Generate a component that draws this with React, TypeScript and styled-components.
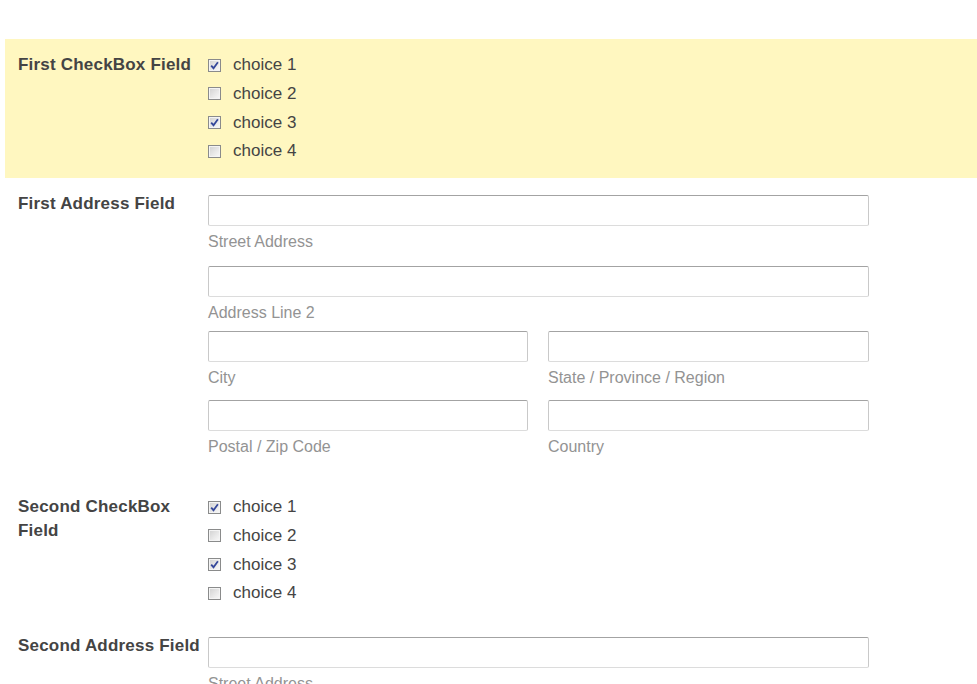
import React from "react";
import styled, { createGlobalStyle } from "styled-components";

const Global = createGlobalStyle`
  html, body { margin: 0; padding: 0; background: #fff; overflow: hidden; }
  body { font-family: "Liberation Sans", Arial, sans-serif; color: #444; }
`;

const Form = styled.ul`
  list-style: none;
  margin: 0;
  padding: 39px 0 0 5px;
`;

const Field = styled.li<{ $highlight?: boolean; $pb: number }>`
  display: grid;
  grid-template-columns: 190px 661px;
  padding: 12px 0 ${(p) => p.$pb}px 13px;
  background: ${(p) => (p.$highlight ? "#fff7c0" : "transparent")};
`;

const Label = styled.label`
  margin-top: 2px;
  font-size: 17px;
  font-weight: bold;
  line-height: 24px;
  letter-spacing: 0.2px;
  color: #444;
`;

const ChoiceList = styled.div`
  display: flex;
  flex-direction: column;
`;

const Choice = styled.label`
  display: flex;
  align-items: center;
  height: 28.67px;
  font-size: 17px;
  color: #444;
`;

const Box = styled.span`
  box-sizing: border-box;
  flex: 0 0 13px;
  width: 13px;
  height: 13px;
  margin-right: 12px;
  border: 1px solid #8a8b8b;
  background: linear-gradient(135deg, #d0d0d0 0%, #e8e8e8 55%, #fafafa 100%);
  box-shadow: inset 0 0 0 1px #f4f4f4;
  display: flex;
  align-items: center;
  justify-content: center;
`;

const Address = styled.div`
  margin-top: 5px;
  display: flex;
  flex-direction: column;
`;

const Row = styled.div<{ $half?: boolean; $mb: number }>`
  display: grid;
  grid-template-columns: ${(p) => (p.$half ? "320px 321px" : "661px")};
  column-gap: 20px;
  margin-bottom: ${(p) => p.$mb}px;
`;

const Part = styled.div`
  display: flex;
  flex-direction: column;
`;

const Input = styled.input`
  box-sizing: border-box;
  height: 31px;
  width: 100%;
  margin: 0;
  border: 1px solid #c9c9c9;
  border-top-color: #a3a3a3;
  border-bottom-color: #dcdcdc;
  border-radius: 2px;
  background: #fff;
  font-family: "Liberation Sans", Arial, sans-serif;
  font-size: 16px;
  outline: none;
`;

const Sub = styled.span`
  margin-top: 6px;
  font-size: 16px;
  line-height: 20px;
  color: #939393;
`;

const Check = () => (
  <svg width="9" height="9" viewBox="0 0 9 9">
    <path d="M1.2 4.6 L3.5 7.2 L7.9 1.3" fill="none" stroke="#34479a" strokeWidth="1.8" />
  </svg>
);

const CheckField = ({ label, highlight, checks, pb }: { label: string; highlight?: boolean; checks: boolean[]; pb: number }) => (
  <Field $highlight={highlight} $pb={pb}>
    <Label>{label}</Label>
    <ChoiceList>
      {checks.map((c, i) => (
        <Choice key={i}>
          <Box>{c && <Check />}</Box>
          choice {i + 1}
        </Choice>
      ))}
    </ChoiceList>
  </Field>
);

const AddressField = ({ label, pb }: { label: string; pb: number }) => (
  <Field $pb={pb}>
    <Label>{label}</Label>
    <Address>
      <Row $mb={14}>
        <Part>
          <Input />
          <Sub>Street Address</Sub>
        </Part>
      </Row>
      <Row $mb={8}>
        <Part>
          <Input />
          <Sub>Address Line 2</Sub>
        </Part>
      </Row>
      <Row $half $mb={12}>
        <Part>
          <Input />
          <Sub>City</Sub>
        </Part>
        <Part>
          <Input />
          <Sub>State / Province / Region</Sub>
        </Part>
      </Row>
      <Row $half $mb={0}>
        <Part>
          <Input />
          <Sub>Postal / Zip Code</Sub>
        </Part>
        <Part>
          <Input />
          <Sub>Country</Sub>
        </Part>
      </Row>
    </Address>
  </Field>
);

export default function App() {
  return (
    <>
      <Global />
      <Form>
        <CheckField label="First CheckBox Field" highlight checks={[true, false, true, false]} pb={12.33} />
        <AddressField label="First Address Field" pb={24} />
        <CheckField label="Second CheckBox Field" checks={[true, false, true, false]} pb={12.33} />
        <AddressField label="Second Address Field" pb={24} />
      </Form>
    </>
  );
}
